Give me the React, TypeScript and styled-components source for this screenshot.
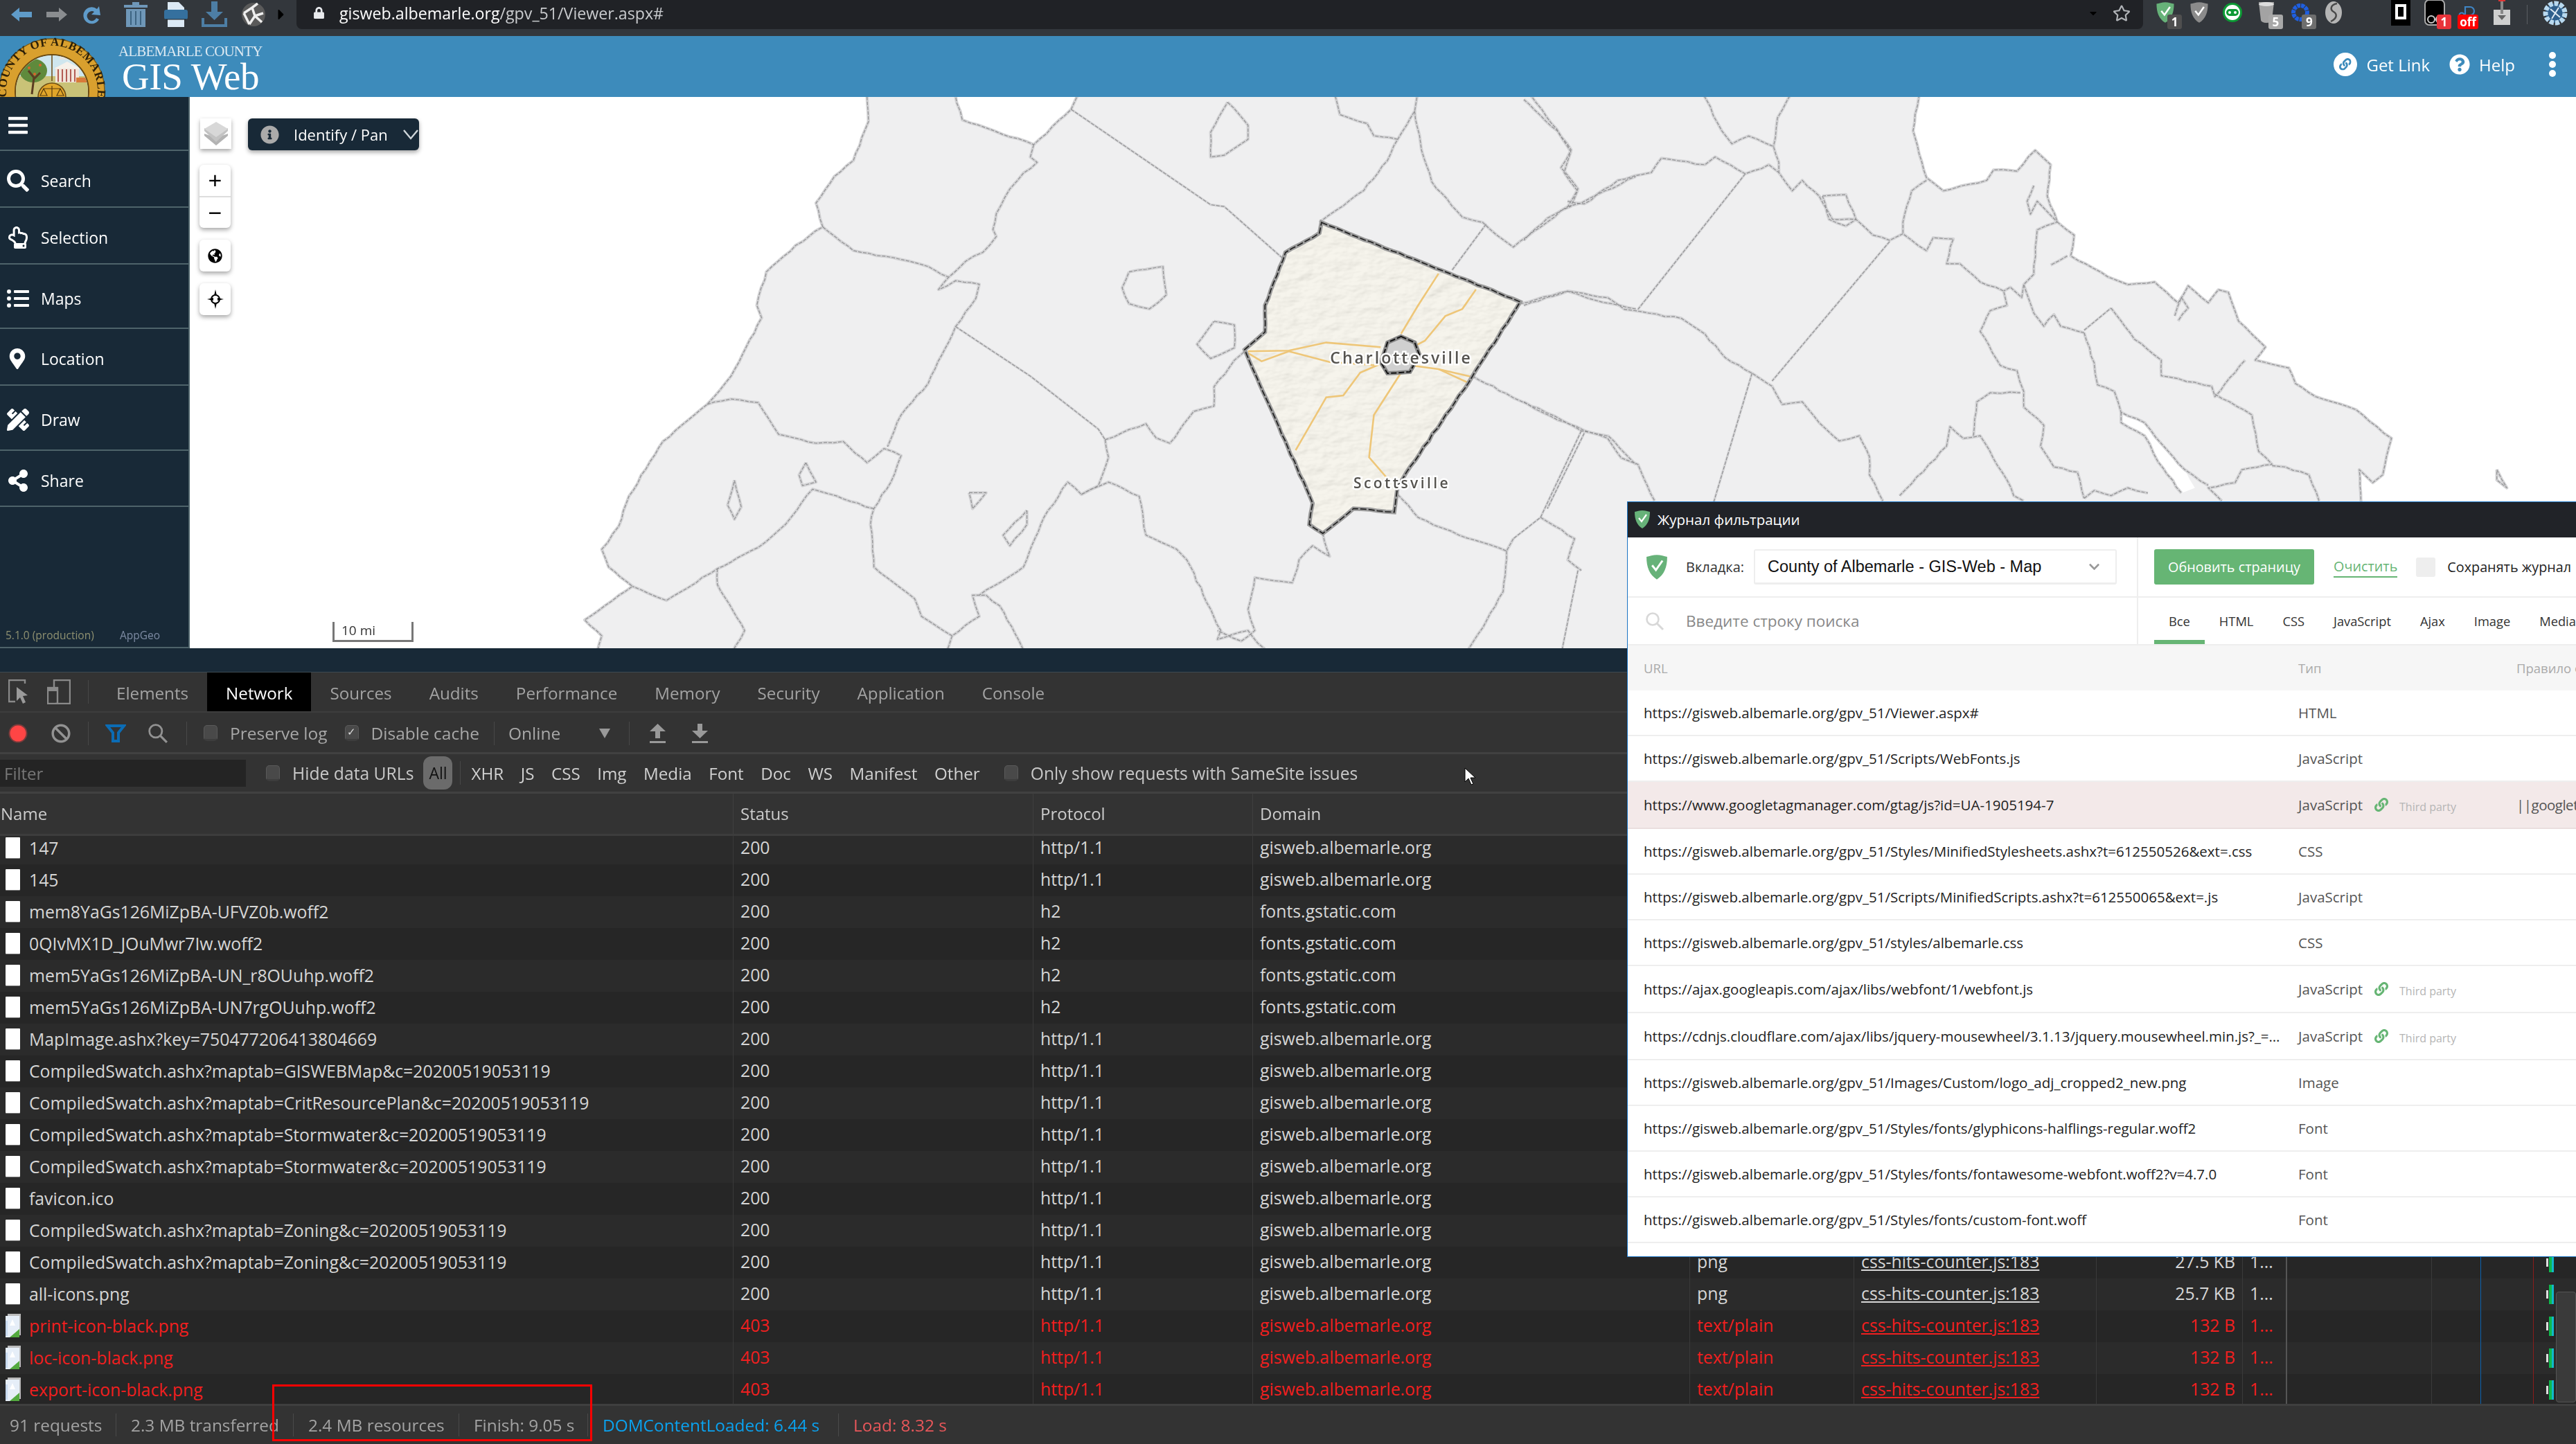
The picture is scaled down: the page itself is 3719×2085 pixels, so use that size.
import React from 'react';
import styled, { createGlobalStyle } from 'styled-components';
import {
  FaBan, FaBars, FaChevronDown, FaLink, FaListUl, FaLock, FaMapMarkerAlt, FaPencilRuler,
  FaQuestionCircle, FaRegHandPointUp, FaRegStar, FaSearch, FaShareAlt, FaInfoCircle, FaGlobeAmericas, FaCaretRight, FaCaretDown,
} from 'react-icons/fa';

const Global = createGlobalStyle`
  html, body { margin: 0; padding: 0; background: #333; }
  * { box-sizing: border-box; }
  body { font-family: "Open Sans", "Noto Sans", sans-serif; }
`;

/* ---------- map data, traced in crop coordinates ---------- */
type Pt = [number, number];
const parse = (s: string): Pt[] => s.trim().split(/\s+/).map((p) => p.split(',').map(Number) as Pt);
const A = (s: string): Pt[] => parse(s).map(([x, y]) => [800 + (x * 1540) / 1568, 140 + (y * 800) / 1568]);
const B = (s: string): Pt[] => parse(s).map(([x, y]) => [2200 + (x * 1519) / 1568, 140 + (y * 590) / 1568]);

let seed = 7;
const rnd = () => {
  seed = (seed * 16807) % 2147483647;
  return seed / 2147483647 - 0.5;
};
const rough = (pts: Pt[], amp = 2.2): Pt[] => {
  const out: Pt[] = [];
  pts.forEach((p, i) => {
    out.push(p);
    const n = pts[i + 1];
    if (!n) return;
    const d = Math.hypot(n[0] - p[0], n[1] - p[1]);
    const steps = Math.floor(d / 11);
    for (let k = 1; k < steps; k++) {
      const t = k / steps;
      out.push([p[0] + (n[0] - p[0]) * t + rnd() * amp, p[1] + (n[1] - p[1]) * t + rnd() * amp]);
    }
  });
  return out;
};
const toD = (pts: Pt[], close = false) => 'M' + pts.map((p) => `${p[0].toFixed(1)} ${p[1].toFixed(1)}`).join('L') + (close ? 'Z' : '');

const landPts: Pt[] = [
  [850, 960],
  ...rough([
    ...A('60,1600 70,1525 45,1480 115,1385 80,1330 70,1280 95,1215 110,1130 160,975 225,870 260,790 305,625 298,590 312,495 355,420 395,368 385,300 412,225 440,180 462,70 460,-30 585,-30 600,65 705,135 760,35 775,-30'),
    ...B('590,-30 580,130 600,310 625,360 690,320 700,280 735,285 762,205 785,260 780,380 795,480 820,530 815,610 870,690 900,720 940,710 975,790 990,725 1020,790 1035,740 1050,750 1065,860 1105,960 1090,1010 1140,1040 1150,1100 1180,1150 1240,1200 1293,1310 1280,1450 1265,1480 1245,1430 1250,1700'),
  ]),
  [3411, 960],
];

const curvy = [
  A('705,135 700,170 710,185 690,215 670,260 650,330 645,375 650,395 630,440 605,465 580,510 565,545 590,520 625,530 620,570 590,650 570,730 550,810 510,900 490,990'),
  A('395,368 440,435 510,460 550,480 580,510'),
  A('810,970 870,925 885,965 905,980 940,890 970,875 970,820 1000,745 1018,715'),
  A('810,970 815,1020 800,1100 775,1125 755,1090 720,1190 690,1330 625,1410'),
  A('225,870 260,855 300,865 330,955 385,980 425,975 460,1035 485,995 510,1015 495,1090 470,1165 465,1210 470,1330 530,1420 540,1470 585,1525 625,1470 615,1410 635,1410 655,1440 695,1580'),
  A('585,1525 575,1580'),
  A('470,1165 380,1110 340,1210 300,1275 240,1335 165,1425 115,1385'),
  A('240,1335 240,1380 280,1510 260,1580'),
  A('775,1125 815,1090 860,1130 870,1240 915,1280 930,1310 980,1510 975,1535 1020,1510 1050,1580'),
  A('990,15 1020,80 1020,120 985,165 965,170 965,100 990,15'),
  A('845,495 895,480 900,560 875,600 845,585 835,540 845,495'),
  A('970,635 1000,645 1000,710 965,740 945,700 970,635'),
  A('370,1035 385,1090 365,1100 360,1070 370,1035'),
  A('265,1085 275,1160 265,1195 255,1155 265,1085'),
  A('610,1120 635,1120 615,1165 610,1120'),
  A('695,1170 695,1210 670,1270 660,1240 695,1170'),
  A('1125,355 1150,320 1190,265 1225,180 1240,120 1265,40 1270,-20'),
  A('1240,120 1205,110 1195,75 1155,50 1145,-20'),
  A('1130,1235 1140,1300 1115,1270 1095,1310 1085,1375 1030,1360 1020,1450 1030,1510 1010,1540 975,1510'),
  A('1410,1250 1400,1285 1330,1240 1270,1190 1240,1125'),
  A('1400,1285 1395,1400 1340,1580'),
  A('1450,1190 1500,1250 1490,1310 1510,1340'),
  B('0,10 50,130 70,210 60,290 80,360 70,420 35,465 0,550'),
  B('265,-20 295,130 310,180 335,150 372,190 380,250 380,290 400,360 415,320 440,380 460,470 495,470 520,530 545,550 565,525 600,590 610,540 640,545 630,640 650,640 680,710 715,745 720,800 695,820 680,900 710,1030 735,1050 745,1130 745,1190 775,1260 770,1340 790,1420 825,1440 835,1540'),
  B('400,-20 378,80 372,190'),
  B('65,400 90,410 140,320 190,290 205,235 270,260 285,230 330,295 365,260 380,290'),
  B('445,380 480,375 495,470 480,495 455,470 445,380'),
  B('0,800 65,745 125,770 150,815 235,850 270,910 300,1000 340,1060 370,1110 385,1180 415,1170 440,1250 470,1320 500,1300 515,1380 515,1450 535,1550'),
  B('0,1170 90,1280 125,1310 145,1385 170,1410 195,1550'),
  B('600,320 578,360 565,480 565,525'),
  B('760,340 750,400 755,450 765,400 795,480 765,510 760,680 745,720 742,770 725,730 715,745'),
  B('745,720 760,830 775,880 790,835 800,880 835,905'),
  B('810,610 785,645'),
  B('875,810 910,930 950,1010 950,1070 1025,1110 1030,1150 1075,1010'),
  B('835,905 850,1020 855,1105 880,1130 890,1210 925,1250 950,1330 985,1430 1020,1490'),
  B('890,1210 890,1250 925,1300 945,1400 980,1520'),
  B('1030,1140 1085,1220 1095,1360 1115,1410 1070,1430 1060,1480 1020,1500 1040,1550'),
  B('1115,1415 1135,1420 1170,1450 1185,1550'),
  B('560,1530 630,1340 635,1265 655,1310 680,1300 720,1470 730,1530 745,1550'),
  B('670,1300 675,1170 695,1135 740,1135'),
  B('835,1540 850,1510 875,1530 900,1500 930,1520'),
  B('1450,1430 1465,1500 1450,1470 1450,1430'),
  B('970,840 980,770 990,810 975,860'),
].map((l) => rough(l));

const straight = [
  A('590,650 700,790 800,940 810,970'),
  A('760,35 965,305 985,310 1070,455'),
  A('1370,360 1320,490'),
  A('1510,945 1450,1190 1410,1250'),
  A('1505,1340 1480,1580'),
  B('330,295 170,815'),
  B('545,555 370,1090'),
  B('340,1060 280,1580'),
  B('90,1290 35,1580'),
  B('835,895 875,810'),
];

const countyPts = rough(A('1128,355 1420,580 1350,790 1240,1100 1235,1175 1175,1165 1130,1235 1110,1210 1115,1150 1015,715 1045,665 1045,590 1075,440 1125,385 1128,355'), 1.5);
const cityPts = rough(A('1245,678 1265,695 1272,730 1258,778 1225,782 1215,750 1225,695 1245,678'), 3);
const roads = [
  '1300,500 1270,590 1245,670',
  '1355,545 1335,600 1310,620 1280,690 1265,705',
  '1020,720 1080,718 1135,695 1215,708',
  '1020,725 1040,748 1080,720 1140,750 1210,760',
  '1090,1000 1135,850 1160,845 1185,780 1215,755',
  '1245,780 1205,900 1198,1020 1225,1080',
  '1260,760 1300,770 1345,810',
  '1300,770 1355,795',
];
const eastLines = [
  A('1420,585 1490,550 1530,575 1590,600'),
  A('1350,790 1420,860 1510,945 1550,960 1590,1040'),
  A('1265,40 1275,150 1290,240 1335,340 1365,355 1385,390 1410,425 1440,380 1490,310 1505,260 1480,200 1495,150 1430,-20'),
  A('1490,310 1510,300 1590,225'),
].map((l) => rough(l));

/* ---------- table data ---------- */
type Req = { name: string; status: string; proto: string; domain: string; type?: string; size?: string; broken?: boolean };
const GIS = 'gisweb.albemarle.org';
const FONTS = 'fonts.gstatic.com';
const requests: Req[] = [
  { name: '147', status: '200', proto: 'http/1.1', domain: GIS },
  { name: '145', status: '200', proto: 'http/1.1', domain: GIS },
  { name: 'mem8YaGs126MiZpBA-UFVZ0b.woff2', status: '200', proto: 'h2', domain: FONTS },
  { name: '0QIvMX1D_JOuMwr7Iw.woff2', status: '200', proto: 'h2', domain: FONTS },
  { name: 'mem5YaGs126MiZpBA-UN_r8OUuhp.woff2', status: '200', proto: 'h2', domain: FONTS },
  { name: 'mem5YaGs126MiZpBA-UN7rgOUuhp.woff2', status: '200', proto: 'h2', domain: FONTS },
  { name: 'MapImage.ashx?key=750477206413804669', status: '200', proto: 'http/1.1', domain: GIS },
  { name: 'CompiledSwatch.ashx?maptab=GISWEBMap&c=20200519053119', status: '200', proto: 'http/1.1', domain: GIS },
  { name: 'CompiledSwatch.ashx?maptab=CritResourcePlan&c=20200519053119', status: '200', proto: 'http/1.1', domain: GIS },
  { name: 'CompiledSwatch.ashx?maptab=Stormwater&c=20200519053119', status: '200', proto: 'http/1.1', domain: GIS },
  { name: 'CompiledSwatch.ashx?maptab=Stormwater&c=20200519053119', status: '200', proto: 'http/1.1', domain: GIS },
  { name: 'favicon.ico', status: '200', proto: 'http/1.1', domain: GIS },
  { name: 'CompiledSwatch.ashx?maptab=Zoning&c=20200519053119', status: '200', proto: 'http/1.1', domain: GIS },
  { name: 'CompiledSwatch.ashx?maptab=Zoning&c=20200519053119', status: '200', proto: 'http/1.1', domain: GIS, type: 'png', size: '27.5 KB' },
  { name: 'all-icons.png', status: '200', proto: 'http/1.1', domain: GIS, type: 'png', size: '25.7 KB' },
  { name: 'print-icon-black.png', status: '403', proto: 'http/1.1', domain: GIS, type: 'text/plain', size: '132 B', broken: true },
  { name: 'loc-icon-black.png', status: '403', proto: 'http/1.1', domain: GIS, type: 'text/plain', size: '132 B', broken: true },
  { name: 'export-icon-black.png', status: '403', proto: 'http/1.1', domain: GIS, type: 'text/plain', size: '132 B', broken: true },
];

const ROOT = 'https://gisweb.albemarle.org/gpv_51/';
const filterRows = [
  { url: ROOT + 'Viewer.aspx#', type: 'HTML' },
  { url: ROOT + 'Scripts/WebFonts.js', type: 'JavaScript' },
  { url: 'https://www.googletagmanager.com/gtag/js?id=UA-1905194-7', type: 'JavaScript', third: true, blocked: true, rule: '||googletagmanager.com' },
  { url: ROOT + 'Styles/MinifiedStylesheets.ashx?t=612550526&ext=.css', type: 'CSS' },
  { url: ROOT + 'Scripts/MinifiedScripts.ashx?t=612550065&ext=.js', type: 'JavaScript' },
  { url: ROOT + 'styles/albemarle.css', type: 'CSS' },
  { url: 'https://ajax.googleapis.com/ajax/libs/webfont/1/webfont.js', type: 'JavaScript', third: true },
  { url: 'https://cdnjs.cloudflare.com/ajax/libs/jquery-mousewheel/3.1.13/jquery.mousewheel.min.js?_=…', type: 'JavaScript', third: true },
  { url: ROOT + 'Images/Custom/logo_adj_cropped2_new.png', type: 'Image' },
  { url: ROOT + 'Styles/fonts/glyphicons-halflings-regular.woff2', type: 'Font' },
  { url: ROOT + 'Styles/fonts/fontawesome-webfont.woff2?v=4.7.0', type: 'Font' },
  { url: ROOT + 'Styles/fonts/custom-font.woff', type: 'Font' },
];

/* ---------- page shell ---------- */
const Page = styled.div`
  position: relative;
  width: 3719px;
  height: 2085px;
  overflow: hidden;
  display: flex;
  flex-direction: column;
`;

/* browser chrome */
const BrowserBar = styled.div`
  height: 52px;
  background: #33373c;
  display: flex;
  align-items: flex-start;
`;
const NavIcons = styled.div`
  width: 428px;
  height: 42px;
  flex: none;
  display: flex;
  align-items: center;
  padding-left: 15px;
`;
const NavIcon = styled.span<{ $ml?: number; $w?: number }>`
  display: flex;
  margin-left: ${(p) => p.$ml || 0}px;
  width: ${(p) => p.$w || 32}px;
  justify-content: center;
`;
const Omnibox = styled.div`
  flex: none;
  width: 2666px;
  height: 42px;
  background: #202226;
  border-radius: 0 0 8px 8px;
  display: flex;
  align-items: center;
  padding: 0 0 5px 24px;
  color: #e8eaed;
  font-size: 23.2px;
`;
const UrlHost = styled.span`
  margin-left: 21px;
  color: #fff;
`;
const UrlPath = styled.span`
  color: #c9cbce;
  flex: 1;
`;
const OmniRight = styled.span`
  display: flex;
  align-items: center;
  gap: 20px;
  margin-right: 18px;
  color: #b0b3b7;
`;
const Extensions = styled.div`
  display: flex;
  align-items: center;
  height: 42px;
  padding-left: 8px;
`;
const ExtSlot = styled.div`
  position: relative;
  width: 48.6px;
  height: 42px;
  display: flex;
  align-items: center;
  justify-content: center;
  padding-bottom: 6px;
`;
const ExtBadge = styled.span<{ $bg: string; $left?: number }>`
  position: absolute;
  left: ${(p) => p.$left ?? 27}px;
  top: 21px;
  min-width: 21px;
  height: 21px;
  padding: 0 3px;
  border-radius: 3px;
  background: ${(p) => p.$bg};
  color: #fff;
  font-size: 17px;
  font-weight: 700;
  line-height: 21px;
  text-align: center;
`;
const ExtSep = styled.div`
  width: 1px;
  height: 28px;
  margin: 0 11px;
  background: #5a5e63;
`;
const GearLogo = styled.svg`
  margin-left: 10px;
`;

/* site header */
const SiteHeader = styled.div`
  height: 88px;
  background: #3d8bbb;
  display: flex;
  align-items: stretch;
  color: #fff;
`;
const SealBox = styled.div`
  width: 171px;
  flex: none;
`;
const Brand = styled.div`
  font-family: "Liberation Serif", serif;
  display: flex;
  flex-direction: column;
  padding-top: 10px;
`;
const BrandSmall = styled.div`
  font-size: 21px;
  line-height: 24px;
  color: #dce9f2;
  letter-spacing: -0.85px;
  white-space: nowrap;
`;
const BrandBig = styled.div`
  font-size: 55px;
  line-height: 50px;
  margin-left: 5px;
  letter-spacing: -0.4px;
`;
const HeaderActions = styled.div`
  margin-left: auto;
  display: flex;
  align-items: center;
  font-size: 24px;
  padding-bottom: 6px;
`;
const HeaderLink = styled.span<{ $mr: number }>`
  display: flex;
  align-items: center;
  gap: 13px;
  margin-right: ${(p) => p.$mr}px;
`;
const Kebab = styled.span`
  width: 11px;
  margin-right: 28px;
  display: flex;
  flex-direction: column;
  gap: 3px;
  i {
    display: block;
    width: 10px;
    height: 10px;
    border-radius: 50%;
    background: #fff;
  }
`;

/* sidebar + map */
const Main = styled.div`
  height: 796px;
  display: flex;
`;
const Sidebar = styled.div`
  width: 274px;
  flex: none;
  background: #182937;
  border-right: 2px solid #4e636a;
  border-bottom: 2px solid #4e636a;
  display: flex;
  flex-direction: column;
  color: #fff;
`;
const SideItem = styled.div<{ $h: number }>`
  height: ${(p) => p.$h}px;
  flex: none;
  border-bottom: 2px solid #4e636a;
  display: flex;
  align-items: center;
  padding: 6px 0 0 10px;
  font-size: 23px;
`;
const SideIcon = styled.span`
  width: 49px;
  display: flex;
  svg { display: block; }
`;
const SideFooter = styled.div`
  margin-top: auto;
  display: flex;
  padding: 0 0 6px 8px;
  font-size: 15.5px;
`;
const Version = styled.span`
  color: #8f9171;
  width: 165px;
`;
const Vendor = styled.span`
  color: #7d8ba3;
`;
const MapPane = styled.div`
  position: relative;
  flex: 1;
  background: #fff;
  overflow: hidden;
`;
const MapSvg = styled.svg`
  display: block;
  width: 100%;
  height: 100%;
`;
const MapButton = styled.div<{ $l: number; $t: number; $h: number; $square?: boolean }>`
  position: absolute;
  left: ${(p) => p.$l}px;
  top: ${(p) => p.$t}px;
  width: 45px;
  height: ${(p) => p.$h}px;
  background: #fff;
  border-radius: ${(p) => (p.$square ? 0 : 6)}px;
  box-shadow: 0 3px 6px rgba(0, 0, 0, 0.35);
  display: flex;
  flex-direction: column;
  align-items: center;
  justify-content: center;
  color: #000;
`;
const ZoomKey = styled.span`
  flex: 1;
  width: 100%;
  display: flex;
  align-items: center;
  justify-content: center;
  font-size: 34px;
  line-height: 1;
  font-family: "Liberation Sans", sans-serif;
  & + & { border-top: 2px solid #ddd; }
`;
const IdentifyButton = styled.div`
  position: absolute;
  left: 84px;
  top: 31px;
  width: 247px;
  height: 46px;
  border-radius: 6px;
  background: #182937;
  box-shadow: 0 3px 6px rgba(0, 0, 0, 0.35);
  color: #fff;
  display: flex;
  align-items: center;
  padding-left: 18px;
  font-size: 22px;
  gap: 21px;
`;
const ScaleBar = styled.div`
  position: absolute;
  left: 206px;
  top: 758px;
  width: 117px;
  height: 29px;
  border: 3px solid #777;
  border-top: 0;
  padding-left: 10px;
  font-size: 19px;
  line-height: 24px;
  color: #333;
`;

const DarkBand = styled.div`
  height: 35px;
  background: #182937;
  border-bottom: 1px solid #3d4a52;
`;

/* devtools */
const DevTools = styled.div`
  flex: 1;
  min-height: 0;
  display: flex;
  flex-direction: column;
  background: #333;
  color: #ccc;
  font-size: 24px;
`;
const TabsBar = styled.div`
  height: 58px;
  flex: none;
  display: flex;
  align-items: stretch;
  border-bottom: 2px solid #3d3d3d;
  padding-left: 12px;
  font-size: 24.2px;
`;
const ToolBtn = styled.span<{ $ml?: number }>`
  display: flex;
  align-items: center;
  margin-left: ${(p) => p.$ml || 0}px;
  flex: none;
`;
const VSep = styled.span<{ $ml: number }>`
  width: 1px;
  align-self: center;
  height: 34px;
  background: #484848;
  margin-left: ${(p) => p.$ml}px;
  flex: none;
`;
const DevTab = styled.span<{ $on?: boolean; $first?: boolean }>`
  display: flex;
  align-items: center;
  padding: 2px 27px 0;
  margin-left: ${(p) => (p.$first ? 13 : 0)}px;
  color: ${(p) => (p.$on ? '#fff' : '#a3a3a3')};
  background: ${(p) => (p.$on ? '#000' : 'transparent')};
`;
const ToolRow = styled.div`
  height: 60px;
  flex: none;
  display: flex;
  align-items: center;
  padding: 2px 0 0 12px;
  border-bottom: 3px solid #414141;
  font-size: 24.5px;
`;
const CheckBox = styled.span<{ $ml: number; $on?: boolean }>`
  width: 20px;
  height: 23px;
  flex: none;
  margin-left: ${(p) => p.$ml}px;
  border-radius: 5px;
  background: #494949;
  border: 1px solid #5a5a5a;
  border-bottom: 3px solid #3d3d3d;
  color: #ddd;
  font-size: 15px;
  line-height: 17px;
  text-align: center;
`;
const CheckLabel = styled.span<{ $c?: string }>`
  margin-left: 18px;
  color: ${(p) => p.$c || '#a8a8a8'};
`;
const OnlineLabel = styled.span`
  color: #a8a8a8;
`;
const FilterRow = styled.div`
  height: 57px;
  flex: none;
  display: flex;
  align-items: center;
  border-bottom: 3px solid #414141;
  font-size: 24.7px;
`;
const FilterInput = styled.div`
  width: 355px;
  height: 39px;
  flex: none;
  background: #242424;
  color: #777;
  padding-left: 6px;
  line-height: 39px;
  font-size: 24px;
`;
const AllPill = styled.span`
  width: 42px;
  height: 48px;
  flex: none;
  margin-left: 14px;
  border-radius: 12px;
  background: #6b6b6b;
  color: #111;
  font-size: 23px;
  line-height: 48px;
  text-align: center;
`;
const TypeList = styled.span`
  display: flex;
  gap: 24.5px;
  margin-left: 15px;
  color: #d0d0d0;
  font-size: 24.2px;
`;
const Cols = '1058px 433px 317px 631px 237px 350px 211px 63px 390px 29px';
const HeadRow = styled.div`
  height: 61px;
  flex: none;
  display: grid;
  grid-template-columns: ${Cols};
  border-bottom: 3px solid #3d3d3d;
`;
const HeadCell = styled.div`
  padding-left: 10px;
  line-height: 58px;
  color: #ccc;
  border-left: 1px solid #3f3f3f;
  &:first-child { border-left: 0; padding-left: 1px; }
`;
const TableBody = styled.div`
  position: relative;
  flex: 1;
  min-height: 0;
  overflow: hidden;
`;
const RowsScroll = styled.div`
  margin-top: -5px;
`;
const NetRow = styled.div<{ $odd: boolean; $bad?: boolean }>`
  height: 46px;
  display: grid;
  grid-template-columns: ${Cols};
  background: ${(p) => (p.$odd ? '#2b2b2b' : '#262626')};
  color: ${(p) => (p.$bad ? '#f11f1f' : '#d6d6d6')};
  line-height: 30px;
  font-size: 24.8px;
`;
const NetCell = styled.div<{ $right?: boolean }>`
  padding: 6px 10px 0;
  border-left: 1px solid #3a3a3a;
  white-space: nowrap;
  text-align: ${(p) => (p.$right ? 'right' : 'left')};
`;
const NameCell = styled.div`
  display: flex;
  align-items: center;
  padding: 0 0 3px 8px;
  gap: 13px;
  white-space: nowrap;
`;
const FileIcon = styled.span`
  width: 21px;
  height: 30px;
  flex: none;
  background: #fff;
  border-radius: 1px;
  box-shadow: 0 1px 0 #777;
`;
const BrokenSvg = styled.svg`
  flex: none;
  margin-right: -3px;
`;
const Initiator = styled.span`
  text-decoration: underline;
`;
const WaterfallCell = styled.div`
  display: flex;
  align-items: center;
  padding-left: 374px;
  gap: 1px;
  border-left: 2px solid #555;
  background-image: linear-gradient(#3a3a3a, #3a3a3a), linear-gradient(#0b62b0, #0b62b0), linear-gradient(#8a1c1c, #8a1c1c);
  background-size: 1px 100%;
  background-repeat: no-repeat;
  background-position: 208px 0, 279px 0, 355px 0;
`;
const BarStub = styled.i`
  width: 3px;
  height: 12px;
  background: #ddd;
`;
const BarMain = styled.i`
  width: 7px;
  height: 28px;
  background: linear-gradient(90deg, #10b84c 0 50%, #11b9c9 50% 100%);
`;
const ScrollThumb = styled.div`
  position: absolute;
  right: 0;
  bottom: 2px;
  width: 29px;
  height: 160px;
  background: #3a3a3a;
  border: 1px solid #555;
  border-radius: 4px;
`;
const StatusBar = styled.div`
  height: 58px;
  flex: none;
  display: flex;
  align-items: center;
  background: #333;
  border-top: 3px solid #3f3f3f;
  padding-left: 14px;
  color: #a3a3a3;
  font-size: 24.4px;
`;
const StatusItem = styled.span<{ $c?: string; $sep?: boolean; $w: number }>`
  width: ${(p) => p.$w - 21}px;
  flex: none;
  margin-right: 21px;
  color: ${(p) => p.$c || 'inherit'};
  border-right: 1px solid ${(p) => (p.$sep === false ? 'transparent' : '#4a4a4a')};
  white-space: nowrap;
`;
const RedBox = styled.div`
  position: absolute;
  left: 393px;
  top: 1999px;
  width: 462px;
  height: 82px;
  border: 3px solid #f00;
`;
const Cursor = styled.svg`
  position: absolute;
  left: 2114px;
  top: 1108px;
`;

/* filtering log window */
const LogPanel = styled.div`
  position: absolute;
  left: 2349px;
  right: 0;
  top: 724px;
  height: 1091px;
  background: #fff;
  border: 1px solid #1b74c4;
  border-right: 0;
  overflow: hidden;
  color: #222;
  font-size: 20.5px;
`;
const LogTitle = styled.div`
  height: 51px;
  background: #212328;
  color: #fff;
  display: flex;
  align-items: center;
  gap: 8px;
  padding: 0 0 2px 7px;
  font-size: 20.5px;
`;
const LogTop = styled.div`
  height: 87px;
  display: flex;
  border-bottom: 2px solid #eee;
`;
const LogLeft = styled.div`
  width: 737px;
  flex: none;
  border-right: 2px solid #eee;
  display: flex;
  align-items: center;
  padding-left: 23px;
`;
const LogRight = styled.div`
  flex: 1;
  display: flex;
  align-items: center;
  padding-left: 23px;
  white-space: nowrap;
  font-size: 19.8px;
`;
const FieldLabel = styled.span`
  margin-left: 23px;
  font-size: 20px;
  color: #333;
`;
const TabSelect = styled.div`
  width: 524px;
  height: 51px;
  margin-left: 14px;
  border: 2px solid #eee;
  border-bottom-width: 3px;
  border-radius: 3px;
  display: flex;
  align-items: center;
  justify-content: space-between;
  padding: 0 22px 0 18px;
  font-family: "Liberation Sans", sans-serif;
  font-size: 23.5px;
  color: #111;
`;
const GreenButton = styled.div`
  width: 231px;
  height: 51px;
  background: #66b574;
  border-radius: 3px;
  color: #fff;
  text-align: center;
  line-height: 51px;
`;
const ClearLink = styled.span`
  margin-left: 28px;
  color: #66b574;
  border-bottom: 2px solid #66b574;
  line-height: 28px;
`;
const KeepBox = styled.span`
  width: 28px;
  height: 28px;
  margin-left: 27px;
  background: #eee;
  border-radius: 3px;
`;
const KeepLabel = styled.span`
  margin-left: 17px;
`;
const LogSearch = styled.div`
  height: 69px;
  display: flex;
  border-bottom: 2px solid #eee;
`;
const SearchField = styled.div`
  width: 737px;
  flex: none;
  border-right: 2px solid #eee;
  display: flex;
  align-items: center;
  padding-left: 25px;
  gap: 31px;
  color: #888;
  font-size: 22.5px;
`;
const LogTabs = styled.div`
  flex: 1;
  display: flex;
  padding-left: 23px;
  font-size: 18.3px;
  color: #333;
  white-space: nowrap;
`;
const LogTab = styled.span<{ $on?: boolean }>`
  padding: 2px 21px 0;
  line-height: 63px;
  border-bottom: 6px solid ${(p) => (p.$on ? '#66b574' : 'transparent')};
`;
const LogHead = styled.div`
  height: 65px;
  background: #f6f6f6;
  display: grid;
  grid-template-columns: 945px 315px 1fr;
  padding-left: 23px;
  align-items: center;
  color: #aaa;
  font-size: 18.5px;
  white-space: nowrap;
`;
const LogRow = styled.div<{ $tall?: boolean; $blocked?: boolean }>`
  height: ${(p) => (p.$tall ? 68 : 66)}px;
  background: ${(p) => (p.$blocked ? '#f3e9e9' : '#fff')};
  border-bottom: 2px solid ${(p) => (p.$blocked ? '#eadede' : '#eee')};
  display: grid;
  grid-template-columns: 945px 110px 36px 169px 1fr;
  padding-left: 23px;
  align-items: center;
  white-space: nowrap;
`;
const LogUrl = styled.span`
  color: #222;
`;
const LogType = styled.span`
  color: #555;
`;
const ThirdParty = styled.span`
  font-size: 16px;
  color: #b5b5b5;
  padding-top: 5px;
`;
const RuleText = styled.span`
  color: #555;
  letter-spacing: -0.5px;
`;

/* ---------- drawings ---------- */
const Shield: React.FC<{ size: number; c?: string }> = ({ size, c = '#67b279' }) => (
  <svg width={size} height={size} viewBox="0 0 24 28">
    <path d="M12 1C8 1 4 2.5 1 3c0 11 3 19 11 24 8-5 11-13 11-24-3-.5-7-2-11-2z" fill={c} />
    <path d="M7 12l4 5 7-10" fill="none" stroke="#fff" strokeWidth="2.2" />
  </svg>
);

const Arrow: React.FC<{ dir: 'l' | 'r'; c: string }> = ({ dir, c }) => (
  <svg width="32" height="24" viewBox="0 0 32 24">
    <path d={dir === 'l' ? 'M1 12L13 2v6h18v8H13v6z' : 'M31 12L19 2v6H1v8h18v6z'} fill={c} />
  </svg>
);

const Seal = () => (
  <svg width="171" height="88" viewBox="0 0 171 88">
    <defs>
      <path id="sealArc" d="M11 96 A66 66 0 1 1 139 96" />
      <clipPath id="sealInner"><circle cx="75" cy="80" r="52" /></clipPath>
    </defs>
    <circle cx="75" cy="80" r="76" fill="#d9a02e" stroke="#7d5a14" strokeWidth="1.5" />
    <circle cx="75" cy="80" r="53" fill="#bfe0ea" stroke="#6b4a12" strokeWidth="2" />
    <g clipPath="url(#sealInner)">
      <rect x="20" y="25" width="110" height="35" fill="#cfe6ee" />
      <rect x="20" y="58" width="110" height="30" fill="#c9c277" />
      <ellipse cx="48" cy="50" rx="20" ry="17" fill="#5f8a3c" />
      <circle cx="58" cy="42" r="2" fill="#d8652a" /><circle cx="42" cy="46" r="2" fill="#d8652a" /><circle cx="50" cy="55" r="2" fill="#d8652a" />
      <path d="M46 84l3-24-8-10M49 62l9-9" stroke="#5b3d22" strokeWidth="3" fill="none" />
      <rect x="80" y="45" width="34" height="22" fill="#f2e6dc" />
      <path d="M78 47h38L97 37z" fill="#f6f1ea" />
      <path d="M86 37a11 11 0 0 1 22 0z" fill="#e9e4dc" transform="translate(0 -3)" />
      <path d="M84 48v18M90 48v18M96 48v18M102 48v18M108 48v18" stroke="#a33a32" strokeWidth="1.6" />
      <rect x="110" y="60" width="22" height="7" fill="#d97a3a" />
      <path d="M75 25v40" stroke="#6b4a12" strokeWidth="1.5" />
    </g>
    <circle cx="75" cy="88" r="20" fill="#e1a62a" stroke="#6b4a12" strokeWidth="1.5" />
    <path d="M75 72v16M63 76h24M63 76l-5 10h10zM87 76l-5 10h10z" fill="none" stroke="#5a3d0c" strokeWidth="1.2" />
    <text fontFamily="Liberation Serif, serif" fontWeight="700" fontSize="17" fill="#2c1f07" letterSpacing="0.6">
      <textPath href="#sealArc" startOffset="8">COUNTY OF ALBEMARLE</textPath>
    </text>
  </svg>
);

const LayersIcon = () => (
  <svg width="36" height="36" viewBox="0 0 36 36">
    <path d="M18 24l17-6v3L18 35 1 21v-3z" fill="#b3b3b3" />
    <path d="M18 18l17-8v4L18 30 1 14v-4z" fill="#c3c3c3" />
    <path d="M18 1l17 10-17 12L1 11z" fill="#d8d8d8" />
  </svg>
);

const FunnelIcon = () => (
  <svg width="30" height="28" viewBox="0 0 30 28">
    <path d="M3 3h24l-8 10v12h-8V13z" fill="none" stroke="#0b6cb5" strokeWidth="4" />
  </svg>
);

const MagnifierIcon: React.FC<{ c: string; size: number }> = ({ c, size }) => (
  <svg width={size} height={size} viewBox="0 0 28 28">
    <circle cx="11" cy="11" r="8.5" fill="none" stroke={c} strokeWidth="2.6" />
    <path d="M17 17l9 9" stroke={c} strokeWidth="3" />
  </svg>
);

const XferIcon: React.FC<{ down?: boolean }> = ({ down }) => (
  <svg width="23" height="28" viewBox="0 0 23 28">
    {down ? <path d="M8 0h7v10h8L11.5 21 0 10h8zM0 25h23v3H0z" fill="#999" /> : <path d="M11.5 0L23 11h-8v10H8V11H0zM0 25h23v3H0z" fill="#999" />}
  </svg>
);

const BrokenImage = () => (
  <BrokenSvg width="24" height="34" viewBox="0 0 24 34">
    <rect x="3" y="0" width="19" height="31" fill="#bbb" />
    <rect x="0" y="3" width="20" height="31" fill="#e6eef8" />
    <path d="M10 8l4 9H6z" fill="#fff" />
    <rect x="0" y="10" width="3" height="22" fill="#c7d9ef" />
    <path d="M6 34l14-12v12z" fill="#53a93f" />
  </BrokenSvg>
);

/* ---------- page ---------- */
const App: React.FC = () => (
  <Page>
    <Global />
    <BrowserBar>
      <NavIcons>
        <Arrow dir="l" c="#5f9bc9" />
        <NavIcon $ml={19}><Arrow dir="r" c="#8a8d90" /></NavIcon>
        <NavIcon $ml={19} $w={30}>
          <svg width="30" height="34" viewBox="0 0 30 34"><path d="M26 24a12 12 0 1 1-3-15l3-4 2 13-13-1 4-4a7 7 0 1 0 3 9z" fill="#5f9bc9" /></svg>
        </NavIcon>
        <NavIcon $ml={31} $w={36}>
          <svg width="36" height="36" viewBox="0 0 36 36"><path d="M1 4h12V0h10v4h12v4H1zM4 10h28v26H4z" fill="#6f97b8" /><path d="M11 13v20M18 13v20M25 13v20" stroke="#3d6482" strokeWidth="2" /></svg>
        </NavIcon>
        <NavIcon $ml={23} $w={34}>
          <svg width="34" height="36" viewBox="0 0 34 36"><path d="M5 0h16l8 8v28H5z" fill="#dce9f5" /><rect x="0" y="11" width="34" height="14" rx="3" fill="#35709e" /><path d="M2 25h30" stroke="#222" /></svg>
        </NavIcon>
        <NavIcon $ml={19} $w={39}>
          <svg width="39" height="38" viewBox="0 0 39 38"><path d="M15 0h9v15h8L19.5 27 7 15h8zM1 24h4v9h29v-9h4v13H1z" fill="#4d7ea5" /></svg>
        </NavIcon>
        <NavIcon $ml={20} $w={34}>
          <svg width="34" height="34" viewBox="0 0 34 34"><circle cx="17" cy="17" r="17" fill="#5a5a5a" /><path d="M3 15l12-8 4 12 12-4M15 7l8-6M19 19l-8 12M19 19l10 9M3 15l8 16" stroke="#eee" strokeWidth="3.5" fill="none" /></svg>
        </NavIcon>
        <NavIcon $ml={18} $w={10}><FaCaretRight size={24} color="#000" /></NavIcon>
      </NavIcons>
      <Omnibox>
        <FaLock size={17} color="#e8eaed" />
        <UrlHost>gisweb.albemarle.org</UrlHost>
        <UrlPath>/gpv_51/Viewer.aspx#</UrlPath>
        <OmniRight>
          <FaCaretDown size={16} color="#000" />
          <FaRegStar size={26} />
        </OmniRight>
      </Omnibox>
      <Extensions>
        <ExtSlot><Shield size={32} /><ExtBadge $bg="#4f4f4f">1</ExtBadge></ExtSlot>
        <ExtSlot><Shield size={32} c="#8b8b8b" /></ExtSlot>
        <ExtSlot>
          <svg width="28" height="28" viewBox="0 0 28 28"><circle cx="14" cy="14" r="14" fill="#0d9a35" /><circle cx="14" cy="14" r="11" fill="#fff" /><rect x="5" y="9" width="18" height="10" rx="5" fill="#0d9a35" /><circle cx="10" cy="14" r="2" fill="#fff" /><circle cx="18" cy="14" r="2" fill="#fff" /></svg>
        </ExtSlot>
        <ExtSlot>
          <svg width="26" height="34" viewBox="0 0 26 34"><path d="M2 2h22l-3 26a8 4 0 0 1-16 0z" fill="#a3a3a3" /><ellipse cx="13" cy="5" rx="11" ry="3" fill="#ddd" /></svg>
          <ExtBadge $bg="#a8a8a8">5</ExtBadge>
        </ExtSlot>
        <ExtSlot>
          <svg width="28" height="32" viewBox="0 0 28 32"><circle cx="14" cy="16" r="10" fill="none" stroke="#1f5fe0" strokeWidth="6" strokeDasharray="5 1" /></svg>
          <ExtBadge $bg="#6e6e6e">9</ExtBadge>
        </ExtSlot>
        <ExtSlot>
          <svg width="26" height="34" viewBox="0 0 26 34"><ellipse cx="13" cy="17" rx="12" ry="16" fill="#b5b5b5" /><path d="M18 4C8 6 8 13 13 16s6 9-4 14" stroke="#4a4a4a" strokeWidth="2.5" fill="none" /></svg>
        </ExtSlot>
        <ExtSlot />
        <ExtSlot>
          <svg width="28" height="38" viewBox="0 0 28 38"><rect width="28" height="38" fill="#000" /><rect x="6" y="7" width="16" height="22" fill="#fff" /><rect x="10" y="11" width="8" height="14" fill="#000" /></svg>
        </ExtSlot>
        <ExtSlot>
          <svg width="30" height="38" viewBox="0 0 30 38"><rect x="1" y="1" width="28" height="36" rx="6" fill="#000" stroke="#aaa" strokeWidth="2" /><circle cx="10" cy="29" r="5" fill="none" stroke="#ccc" strokeWidth="2" /><circle cx="22" cy="29" r="5" fill="none" stroke="#ccc" strokeWidth="2" /></svg>
          <ExtBadge $bg="#e8333a">1</ExtBadge>
        </ExtSlot>
        <ExtSlot>
          <svg width="30" height="22" viewBox="0 0 30 22"><circle cx="5" cy="15" r="3.5" fill="none" stroke="#3f86c6" strokeWidth="2" /><path d="M9 15h8a6 6 0 0 0 0-12h-7v12M4 21h24" stroke="#3f86c6" strokeWidth="2.2" fill="none" /></svg>
          <ExtBadge $bg="#f00" $left={9}>off</ExtBadge>
        </ExtSlot>
        <ExtSlot>
          <svg width="26" height="38" viewBox="0 0 26 38"><rect x="8" y="0" width="10" height="3" fill="#d33" /><rect x="1" y="15" width="24" height="22" fill="#cfcfcf" /><rect x="11" y="3" width="4" height="18" fill="#888" /><path d="M7 23h12l-6 7z" fill="#666" /></svg>
        </ExtSlot>
        <ExtSep />
        <GearLogo width="38" height="44" viewBox="0 0 38 44">
          <circle cx="19" cy="20" r="14" fill="#2f5f8c" stroke="#b9d9ef" strokeWidth="7" strokeDasharray="6 2" />
          <path d="M12 14l14 12M24 12L14 28" stroke="#dfeaf3" strokeWidth="2" />
        </GearLogo>
      </Extensions>
    </BrowserBar>

    <SiteHeader>
      <SealBox><Seal /></SealBox>
      <Brand>
        <BrandSmall>ALBEMARLE COUNTY</BrandSmall>
        <BrandBig>GIS Web</BrandBig>
      </Brand>
      <HeaderActions>
        <HeaderLink $mr={28}>
          <svg width="34" height="34" viewBox="0 0 34 34"><circle cx="17" cy="17" r="17" fill="#fff" /><g transform="translate(8 8) scale(1.1)"><FaLink size={16} color="#3d8bbb" /></g></svg>
          Get Link
        </HeaderLink>
        <HeaderLink $mr={49}>
          <FaQuestionCircle size={30} />
          Help
        </HeaderLink>
        <Kebab><i /><i /><i /></Kebab>
      </HeaderActions>
    </SiteHeader>

    <Main>
      <Sidebar>
        <SideItem $h={78}><SideIcon><FaBars size={32} /></SideIcon></SideItem>
        <SideItem $h={82}><SideIcon><FaSearch size={32} /></SideIcon>Search</SideItem>
        <SideItem $h={82}><SideIcon><FaRegHandPointUp size={32} /></SideIcon>Selection</SideItem>
        <SideItem $h={93}><SideIcon><FaListUl size={32} /></SideIcon>Maps</SideItem>
        <SideItem $h={82}><SideIcon><FaMapMarkerAlt size={30} /></SideIcon>Location</SideItem>
        <SideItem $h={94}><SideIcon><FaPencilRuler size={32} /></SideIcon>Draw</SideItem>
        <SideItem $h={81}><SideIcon><FaShareAlt size={32} /></SideIcon>Share</SideItem>
        <SideFooter>
          <Version>5.1.0 (production)</Version>
          <Vendor>AppGeo</Vendor>
        </SideFooter>
      </Sidebar>
      <MapPane>
        <MapSvg viewBox="274 140 3445 796" preserveAspectRatio="none">
          <defs>
            <clipPath id="countyClip"><path d={toD(countyPts, true)} /></clipPath>
            <filter id="relief" x="0" y="0" width="100%" height="100%">
              <feTurbulence type="fractalNoise" baseFrequency="0.035 0.06" numOctaves="3" seed="4" />
              <feDiffuseLighting lightingColor="#fff" surfaceScale="3" diffuseConstant="1.1">
                <feDistantLight azimuth="225" elevation="55" />
              </feDiffuseLighting>
            </filter>
          </defs>
          <path d={toD(landPts, true)} fill="#efeff0" />
          <path d={toD(rough(B('890,1210 890,1250 925,1300 945,1400 980,1520 1000,1500 985,1430 950,1330 925,1250')), true)} fill="#fff" />
          <g fill="none" strokeLinejoin="round">
            <g stroke="#d4d4d6" strokeWidth="4.5">
              <path d={toD(landPts)} />
              {curvy.concat(eastLines).map((l, i) => <path key={i} d={toD(l)} />)}
              {straight.map((l, i) => <path key={i} d={toD(l)} strokeWidth="3.5" />)}
            </g>
            <g stroke="#929294" strokeWidth="1.2" strokeDasharray="5 2">
              <path d={toD(landPts)} />
              {curvy.concat(eastLines).map((l, i) => <path key={i} d={toD(l)} />)}
              {straight.map((l, i) => <path key={i} d={toD(l)} />)}
            </g>
          </g>
          <path d={toD(countyPts, true)} fill="#f2efe3" />
          <g clipPath="url(#countyClip)">
            <rect x="1780" y="300" width="440" height="480" filter="url(#relief)" opacity="0.32" style={{ mixBlendMode: 'multiply' }} />
            <g fill="none" stroke="#eec678" strokeWidth="2.6">
              {roads.map((r, i) => <path key={i} d={toD(A(r))} />)}
            </g>
          </g>
          <path d={toD(countyPts, true)} fill="none" stroke="#9c9c9c" strokeWidth="6" />
          <path d={toD(countyPts, true)} fill="none" stroke="#222" strokeWidth="1.7" strokeDasharray="9 3" />
          <path d={toD(cityPts, true)} fill="#d0d0d0" stroke="#888" strokeWidth="6" />
          <path d={toD(cityPts, true)} fill="none" stroke="#111" strokeWidth="2" strokeDasharray="8 3" />
          <g fontFamily="Open Sans, sans-serif" fontWeight="600" fill="#55534f" stroke="#fff" strokeWidth="5" textAnchor="middle" style={{ paintOrder: 'stroke' }}>
            <text x="2023" y="525" fontSize="23" letterSpacing="3">Charlottesville</text>
            <text x="2024" y="705" fontSize="21" letterSpacing="3.4">Scottsville</text>
          </g>
        </MapSvg>
        <MapButton $l={15} $t={31} $h={44} $square><LayersIcon /></MapButton>
        <IdentifyButton>
          <FaInfoCircle size={27} color="#aaa" />
          <span>Identify / Pan</span>
          <svg width="24" height="16" viewBox="0 0 24 16"><path d="M2 2l10 12L22 2" fill="none" stroke="#cfd6da" strokeWidth="2.4" /></svg>
        </IdentifyButton>
        <MapButton $l={14} $t={98} $h={91}>
          <ZoomKey>+</ZoomKey>
          <ZoomKey>−</ZoomKey>
        </MapButton>
        <MapButton $l={14} $t={206} $h={46}><FaGlobeAmericas size={21} /></MapButton>
        <MapButton $l={14} $t={269} $h={46}>
          <svg width="24" height="28" viewBox="0 0 24 28"><path d="M12 0l2 9h-4zM12 28l2-9h-4zM0 14l9-2v4zM24 14l-9-2v4z" fill="#000" /><circle cx="12" cy="14" r="6" fill="none" stroke="#000" strokeWidth="2" /></svg>
        </MapButton>
        <ScaleBar>10 mi</ScaleBar>
      </MapPane>
    </Main>

    <DarkBand />

    <DevTools>
      <TabsBar>
        <ToolBtn>
          <svg width="32" height="36" viewBox="0 0 32 36"><path d="M24 6V1H1v31h9" fill="none" stroke="#8a8a8a" strokeWidth="2.4" /><path d="M12 11l16 12-7 1 4 9-4 2-4-9-5 5z" fill="#9a9a9a" /></svg>
        </ToolBtn>
        <ToolBtn $ml={24}>
          <svg width="34" height="36" viewBox="0 0 34 36"><path d="M10 12V1h23v34H12" fill="none" stroke="#8a8a8a" strokeWidth="2.4" /><rect x="1" y="12" width="14" height="23" fill="none" stroke="#8a8a8a" strokeWidth="2.4" /><rect x="1" y="12" width="14" height="5" fill="#8a8a8a" /></svg>
        </ToolBtn>
        <VSep $ml={25} />
        <DevTab $first>Elements</DevTab>
        <DevTab $on>Network</DevTab>
        <DevTab>Sources</DevTab>
        <DevTab>Audits</DevTab>
        <DevTab>Performance</DevTab>
        <DevTab>Memory</DevTab>
        <DevTab>Security</DevTab>
        <DevTab>Application</DevTab>
        <DevTab>Console</DevTab>
      </TabsBar>

      <ToolRow>
        <ToolBtn>
          <svg width="28" height="28" viewBox="0 0 28 28"><circle cx="14" cy="14" r="13.5" fill="#ff4a4a" opacity="0.35" /><circle cx="14" cy="14" r="11.5" fill="#ff4545" /></svg>
        </ToolBtn>
        <ToolBtn $ml={34}><FaBan size={28} color="#929292" /></ToolBtn>
        <VSep $ml={25} />
        <ToolBtn $ml={24}><FunnelIcon /></ToolBtn>
        <ToolBtn $ml={31}><MagnifierIcon c="#929292" size={30} /></ToolBtn>
        <VSep $ml={26} />
        <CheckBox $ml={24} />
        <CheckLabel>Preserve log</CheckLabel>
        <CheckBox $ml={25} $on>✓</CheckBox>
        <CheckLabel>Disable cache</CheckLabel>
        <VSep $ml={21} />
        <ToolBtn $ml={20}><OnlineLabel>Online</OnlineLabel></ToolBtn>
        <ToolBtn $ml={56}>
          <svg width="16" height="14" viewBox="0 0 16 14"><path d="M0 0h16L8 14z" fill="#999" /></svg>
        </ToolBtn>
        <VSep $ml={27} />
        <ToolBtn $ml={29}><XferIcon /></ToolBtn>
        <ToolBtn $ml={38}><XferIcon down /></ToolBtn>
      </ToolRow>

      <FilterRow>
        <FilterInput>Filter</FilterInput>
        <CheckBox $ml={29} />
        <CheckLabel $c="#c8c8c8">Hide data URLs</CheckLabel>
        <AllPill>All</AllPill>
        <VSep $ml={11} />
        <TypeList>
          <span>XHR</span><span>JS</span><span>CSS</span><span>Img</span><span>Media</span><span>Font</span><span>Doc</span><span>WS</span><span>Manifest</span><span>Other</span>
        </TypeList>
        <CheckBox $ml={35} />
        <CheckLabel $c="#c8c8c8">Only show requests with SameSite issues</CheckLabel>
      </FilterRow>

      <HeadRow>
        <HeadCell>Name</HeadCell>
        <HeadCell>Status</HeadCell>
        <HeadCell>Protocol</HeadCell>
        <HeadCell>Domain</HeadCell>
      </HeadRow>

      <TableBody>
        <RowsScroll>
          {requests.map((r, i) => (
            <NetRow key={i} $odd={i % 2 === 0} $bad={r.broken}>
              <NameCell>
                {r.broken ? <BrokenImage /> : <FileIcon />}
                {r.name}
              </NameCell>
              <NetCell>{r.status}</NetCell>
              <NetCell>{r.proto}</NetCell>
              <NetCell>{r.domain}</NetCell>
              <NetCell>{r.type}</NetCell>
              <NetCell>{r.type && <Initiator>css-hits-counter.js:183</Initiator>}</NetCell>
              <NetCell $right>{r.size}</NetCell>
              <NetCell>{r.type && '1...'}</NetCell>
              <WaterfallCell>
                {r.type && <BarStub />}
                {r.type && <BarMain />}
              </WaterfallCell>
            </NetRow>
          ))}
        </RowsScroll>
        <ScrollThumb />
      </TableBody>

      <StatusBar>
        <StatusItem $w={175}>91 requests</StatusItem>
        <StatusItem $w={256}>2.3 MB transferred</StatusItem>
        <StatusItem $w={239}>2.4 MB resources</StatusItem>
        <StatusItem $w={186}>Finish: 9.05 s</StatusItem>
        <StatusItem $w={362} $c="#0aa2ef">DOMContentLoaded: 6.44 s</StatusItem>
        <StatusItem $w={180} $c="#e8575a" $sep={false}>Load: 8.32 s</StatusItem>
      </StatusBar>
    </DevTools>

    <RedBox />
    <Cursor width="18" height="26" viewBox="0 0 18 26">
      <path d="M1 1v20l5-5 4 9 3-1-4-9h7z" fill="#fff" stroke="#000" />
    </Cursor>

    <LogPanel>
      <LogTitle>
        <Shield size={28} />
        Журнал фильтрации
      </LogTitle>
      <LogTop>
        <LogLeft>
          <Shield size={38} />
          <FieldLabel>Вкладка:</FieldLabel>
          <TabSelect>
            County of Albemarle - GIS-Web - Map
            <FaChevronDown size={17} color="#999" />
          </TabSelect>
        </LogLeft>
        <LogRight>
          <GreenButton>Обновить страницу</GreenButton>
          <ClearLink>Очистить</ClearLink>
          <KeepBox />
          <KeepLabel>Сохранять журнал</KeepLabel>
        </LogRight>
      </LogTop>
      <LogSearch>
        <SearchField>
          <MagnifierIcon c="#d8d8d8" size={28} />
          Введите строку поиска
        </SearchField>
        <LogTabs>
          <LogTab $on>Все</LogTab>
          <LogTab>HTML</LogTab>
          <LogTab>CSS</LogTab>
          <LogTab>JavaScript</LogTab>
          <LogTab>Ajax</LogTab>
          <LogTab>Image</LogTab>
          <LogTab>Media</LogTab>
        </LogTabs>
      </LogSearch>
      <LogHead>
        <span>URL</span>
        <span>Тип</span>
        <span>Правило фильтрации</span>
      </LogHead>
      {filterRows.map((r, i) => (
        <LogRow key={i} $tall={r.third} $blocked={r.blocked}>
          <LogUrl>{r.url}</LogUrl>
          <LogType>{r.type}</LogType>
          {r.third ? <FaLink size={20} color="#66b574" /> : <span />}
          {r.third ? <ThirdParty>Third party</ThirdParty> : <span />}
          <RuleText>{r.rule}</RuleText>
        </LogRow>
      ))}
    </LogPanel>
  </Page>
);

export default App;
